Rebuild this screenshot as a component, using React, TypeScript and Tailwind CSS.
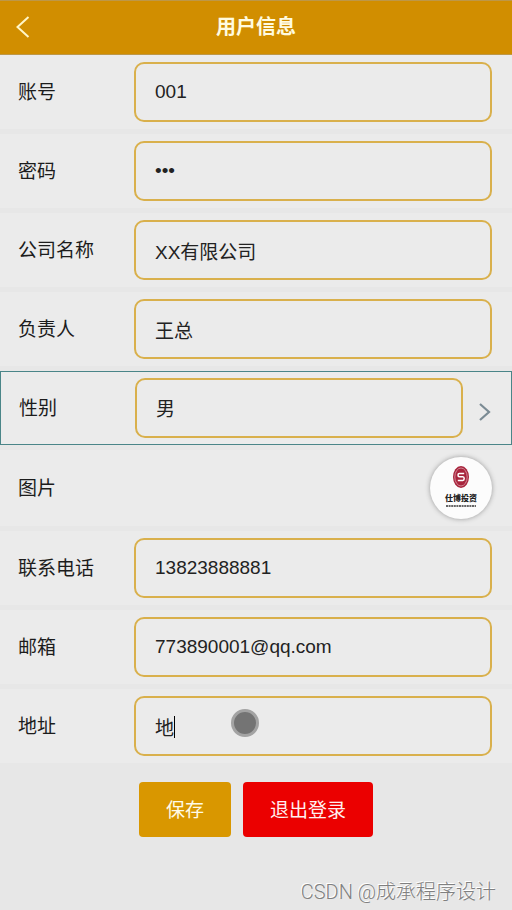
import { useState } from "react";
import type { ReactNode } from "react";

const rowClass = "flex items-center bg-[#ebebeb] pr-5 pl-[18px] py-[7px]";
const labelClass = "w-[116px] shrink-0 pt-[2px] text-[19px] leading-6 text-[#1c1c1c]";
const fieldClass =
  "h-[60px] w-full min-w-0 flex-1 appearance-none rounded-[10px] border-2 border-[#d9b04c] bg-transparent px-[19px] text-[19px] text-[#222222] outline-none";

type FieldProps = {
  id: string;
  label: string;
  initial: string;
  type?: string;
  children?: ReactNode;
};

function Field({ id, label, initial, type = "text", children }: FieldProps) {
  const [value, setValue] = useState(initial);
  return (
    <div className={rowClass}>
      <label htmlFor={id} className={labelClass}>
        {label}
      </label>
      <div className="relative flex flex-1">
        <input
          id={id}
          type={type}
          value={value}
          onChange={(e) => setValue(e.target.value)}
          className={fieldClass}
        />
        {children}
      </div>
    </div>
  );
}

function CompanyLogo() {
  return (
    <svg viewBox="0 0 62 62" className="size-full" aria-hidden="true">
      <ellipse cx="31" cy="20" rx="8" ry="11" fill="#a8243c" />
      <ellipse cx="31" cy="20" rx="6.2" ry="9" fill="none" stroke="#dba3ae" strokeWidth="0.8" />
      <path
        d="M34.2 16.4H29.4Q28 16.4 28 18Q28 19.8 29.4 19.8H32.8Q34.2 19.8 34.2 21.6Q34.2 23.4 32.8 23.4H27.8"
        fill="none"
        stroke="#ffffff"
        strokeWidth="1.5"
      />
      <text x="31" y="44" textAnchor="middle" fontSize="8" fontWeight="900" fill="#222222">
        仕博投资
      </text>
      <path d="M16 49H46" stroke="#666666" strokeWidth="2" strokeDasharray="2 0.6" />
    </svg>
  );
}

export default function App() {
  const [gender, setGender] = useState("男");
  return (
    <div className="relative min-h-screen bg-[#e7e7e7] font-['Liberation_Sans','Noto_Sans_CJK_SC',sans-serif]">
      <header className="relative flex h-[55px] items-center justify-center border-y border-[#bd9748] bg-[#d18e00] pb-[2px]">
        <button type="button" aria-label="返回" className="absolute top-0 bottom-[2px] left-0 flex w-12 items-center pl-4">
          <svg viewBox="0 0 14 22" className="h-[22px] w-[14px]" fill="none" stroke="#fff6c8" strokeWidth="2">
            <path d="M12.5 1L1.5 11L12.5 21" />
          </svg>
        </button>
        <h1 className="text-xl font-bold text-[#fffbe0]">用户信息</h1>
      </header>

      <form onSubmit={(e) => e.preventDefault()}>
        <div className="flex flex-col gap-[5px]">
          <Field id="account" label="账号" initial="001" />
          <Field id="password" label="密码" initial="001" type="password" />
          <Field id="company" label="公司名称" initial="XX有限公司" />
          <Field id="manager" label="负责人" initial="王总" />

          <div className="flex items-center border border-[#4a8588] bg-[#ebebeb] pr-5 pl-[18px] py-[6px]">
            <label htmlFor="gender" className={labelClass}>
              性别
            </label>
            <select
              id="gender"
              value={gender}
              onChange={(e) => setGender(e.target.value)}
              className={`${fieldClass} pt-1`}
            >
              <option>男</option>
              <option>女</option>
            </select>
            <svg
              viewBox="0 0 12 18"
              className="mt-2 ml-4 h-[18px] w-3 shrink-0"
              fill="none"
              stroke="#7b8b94"
              strokeWidth="2.2"
              aria-hidden="true"
            >
              <path d="M1 1L10 9L1 17" />
            </svg>
          </div>

          <div className={rowClass}>
            <span className={labelClass}>图片</span>
            <button
              type="button"
              aria-label="更换图片"
              className="ml-auto size-[62px] rounded-full bg-[#fcfcfc] shadow-[0_0_5px_#999999]"
            >
              <CompanyLogo />
            </button>
          </div>

          <Field id="phone" label="联系电话" initial="13823888881" />
          <Field id="email" label="邮箱" initial="773890001@qq.com" />
          <Field id="address" label="地址" initial="地">
            <span className="absolute top-5 left-10 h-[22px] w-px bg-black" />
            <span className="absolute top-[13px] left-[97px] size-7 rounded-full border-[3px] border-[#a3a3a3] bg-[#747474]" />
          </Field>
        </div>

        <div className="flex justify-center gap-3 pt-[19px]">
          <button type="submit" className="h-[55px] rounded-[4px] bg-[#d99700] px-[27px] pt-1 text-[19px] text-[#fffbe8]">
            保存
          </button>
          <button type="button" className="h-[55px] rounded-[4px] bg-[#eb0000] px-[27px] pt-1 text-[19px] text-[#fff0f0]">
            退出登录
          </button>
        </div>
      </form>

      <p className="absolute right-4 bottom-1 font-['Roboto','Noto_Sans_CJK_SC',sans-serif] text-xl font-light text-[#808080] [text-shadow:-1px_-1px_0_#ffffff]">
        CSDN @成承程序设计
      </p>
    </div>
  );
}
